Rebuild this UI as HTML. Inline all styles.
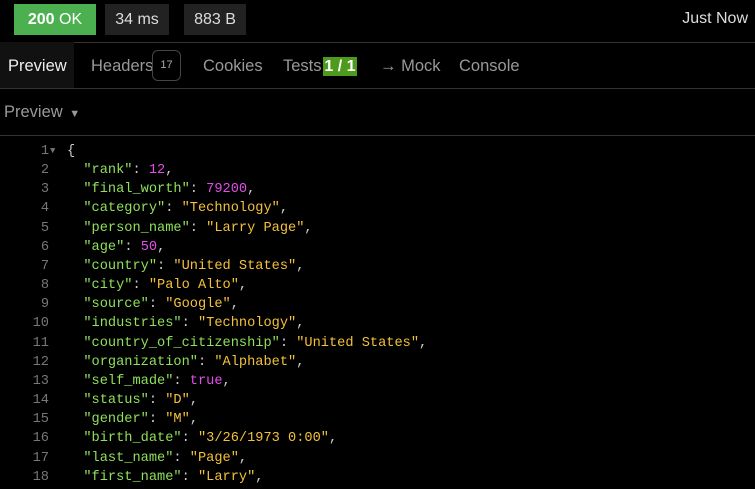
<!DOCTYPE html>
<html><head><style>
*{margin:0;padding:0;box-sizing:border-box}
body{width:755px;height:489px;background:#000;overflow:hidden;font-family:"Liberation Sans",sans-serif;color:#ddd;position:relative}
.top{position:absolute;left:0;top:0;width:755px;height:43px;border-bottom:1px solid #333}
.pill{position:absolute;top:4px;height:31px;line-height:31px;font-size:16px;text-align:center;background:#222;color:#ddd}
.tabs{position:absolute;left:0;top:42px;width:755px;height:47px;border-bottom:1px solid #333}
.tab{position:absolute;top:0;height:46px;line-height:48px;font-size:16.5px;color:#999}
.sub{position:absolute;left:0;top:89px;width:755px;height:47px;border-bottom:1px solid #333;font-size:16.5px;color:#999;line-height:46px;padding-left:4px}
.mono{font-family:"Liberation Mono",monospace;font-size:13.65px;line-height:19.15px;white-space:pre}
.k{color:#8fe05a}.s{color:#f3c13a}.n{color:#e24ee8}
</style></head><body>
<div class="top">
<div class="pill" style="left:14px;width:82px;background:#4caf50;color:#fff"><b>200</b> OK</div>
<div class="pill" style="left:105px;width:64px">34 ms</div>
<div class="pill" style="left:184px;width:62px">883 B</div>
<div style="position:absolute;right:7px;top:10px;font-size:16px;color:#ddd">Just Now</div>
</div>
<div class="tabs">
<div class="tab" style="left:0;width:74px;background:#111;color:#eee;padding-left:8px">Preview</div>
<div class="tab" style="left:91px">Headers</div>
<div style="position:absolute;left:152px;top:8px;width:29px;height:31px;border:1px solid #444;border-radius:6px;font-size:11px;color:#aaa;text-align:center;line-height:29px">17</div>
<div class="tab" style="left:203px">Cookies</div>
<div class="tab" style="left:283px">Tests</div>
<div style="position:absolute;left:323px;top:15px;width:34px;height:19px;background:#4e9a1c;color:#fff;font-size:16px;font-weight:bold;text-align:center;line-height:19px">1 / 1</div>
<div class="tab" style="left:380px">→ Mock</div>
<div class="tab" style="left:459px">Console</div>
</div>
<div class="sub">Preview <span style="font-size:11px;margin-left:2px">▼</span></div>
<div class="mono" style="position:absolute;left:0;top:142px;width:49px;text-align:right;color:#777">1
2
3
4
5
6
7
8
9
10
11
12
13
14
15
16
17
18</div>
<div class="mono" style="position:absolute;left:50px;top:142px;color:#777;font-size:9px">▼</div>
<div class="mono" style="position:absolute;left:67px;top:142px;color:#ccc">{
  <span class="k">"rank"</span>: <span class="n">12</span>,
  <span class="k">"final_worth"</span>: <span class="n">79200</span>,
  <span class="k">"category"</span>: <span class="s">"Technology"</span>,
  <span class="k">"person_name"</span>: <span class="s">"Larry Page"</span>,
  <span class="k">"age"</span>: <span class="n">50</span>,
  <span class="k">"country"</span>: <span class="s">"United States"</span>,
  <span class="k">"city"</span>: <span class="s">"Palo Alto"</span>,
  <span class="k">"source"</span>: <span class="s">"Google"</span>,
  <span class="k">"industries"</span>: <span class="s">"Technology"</span>,
  <span class="k">"country_of_citizenship"</span>: <span class="s">"United States"</span>,
  <span class="k">"organization"</span>: <span class="s">"Alphabet"</span>,
  <span class="k">"self_made"</span>: <span class="n">true</span>,
  <span class="k">"status"</span>: <span class="s">"D"</span>,
  <span class="k">"gender"</span>: <span class="s">"M"</span>,
  <span class="k">"birth_date"</span>: <span class="s">"3/26/1973 0:00"</span>,
  <span class="k">"last_name"</span>: <span class="s">"Page"</span>,
  <span class="k">"first_name"</span>: <span class="s">"Larry"</span>,</div>
</body></html>
